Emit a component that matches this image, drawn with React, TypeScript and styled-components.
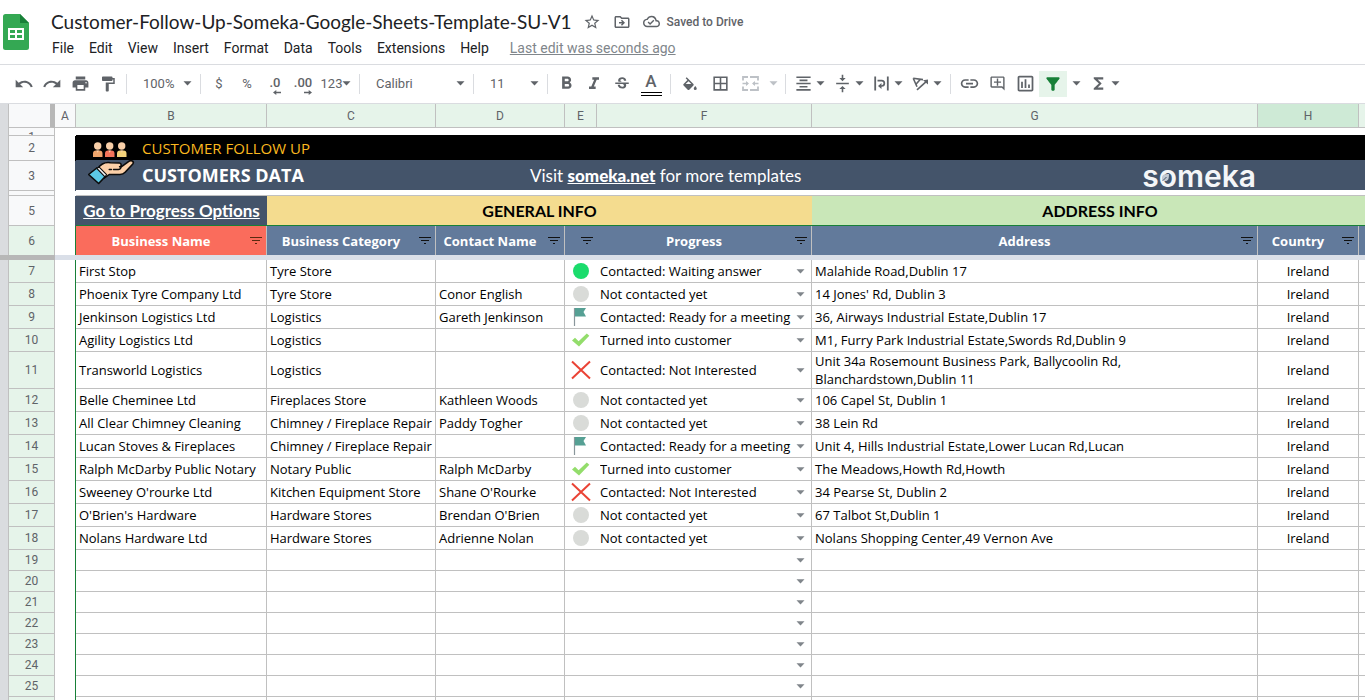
import React from 'react';
import styled, { createGlobalStyle, css } from 'styled-components';
import {
  MdUndo,
  MdRedo,
  MdPrint,
  MdFormatPaint,
  MdStarBorder,
  MdOutlineDriveFileMove,
  MdOutlineCloudDone,
  MdFormatBold,
  MdFormatItalic,
  MdStrikethroughS,
  MdBorderAll,
  MdFormatAlignCenter,
  MdVerticalAlignCenter,
  MdLink,
  MdOutlineAddComment,
  MdOutlineInsertChart,
  MdFilterAlt,
  MdFunctions,
} from 'react-icons/md';

const GRID = '#c0c0c0';
const GREEN = '#188038';
const NAVY = '#44546a';
const SLATE = '#627a9b';

const GlobalStyle = createGlobalStyle`
  *, *::before, *::after { box-sizing: border-box; }
  body {
    margin: 0;
    background: #fff;
    color: #202124;
    font-family: Roboto, 'Liberation Sans', sans-serif;
  }
  button, select {
    font: inherit;
    color: inherit;
    border: 0;
    margin: 0;
    padding: 0;
    background: none;
    cursor: pointer;
  }
`;

const Page = styled.div`
  display: flex;
  flex-direction: column;
  height: 100vh;
  overflow: hidden;
`;

/* ---------- document header ---------- */

const DocHeader = styled.header`
  display: flex;
  gap: 16px;
  height: 65px;
  flex: none;
  padding: 10px 0 0 3px;
  border-bottom: 1px solid #dadce0;
`;

const HomeLink = styled.a`
  display: block;
  padding-top: 4px;
`;

const DocInfo = styled.div`
  display: flex;
  flex-direction: column;
`;

const TitleRow = styled.div`
  display: flex;
  align-items: center;
  height: 23px;
  padding-left: 6px;
`;

const DocTitle = styled.h1`
  margin: 0 5px 0 0;
  font-family: Lato, sans-serif;
  font-size: 19px;
  line-height: 23px;
  font-weight: 400;
  white-space: nowrap;
`;

const TitleButton = styled.button`
  display: flex;
  align-items: center;
  gap: 7px;
  height: 22px;
  padding: 0 6px;
  color: #5f6368;
  font-size: 12px;
  font-weight: 500;
  white-space: nowrap;
`;

const MenuBar = styled.nav`
  display: flex;
  align-items: center;
  gap: 1px;
  height: 30px;
  font-size: 14px;
`;

const MenuItem = styled.button`
  padding: 0 7px;
  line-height: 24px;
  white-space: nowrap;
`;

const LastEdit = styled.a`
  margin-left: 13px;
  color: #80868b;
  text-decoration: underline;
  white-space: nowrap;
`;

/* ---------- toolbar ---------- */

const Toolbar = styled.div`
  display: flex;
  align-items: center;
  height: 39px;
  flex: none;
  padding: 0 0 1px 10px;
  border-bottom: 1px solid #dadce0;
  color: #5f6368;
  font-size: 13px;
`;

const Tool = styled.button<{ $w?: number; $active?: boolean; $muted?: boolean }>`
  display: flex;
  flex: none;
  align-items: center;
  justify-content: center;
  width: ${(p) => p.$w ?? 28}px;
  height: 26px;
  background: ${(p) => (p.$active ? '#e6f4ea' : 'transparent')};
  color: ${(p) => (p.$active ? GREEN : p.$muted ? '#bdc1c6' : 'inherit')};
`;

const SplitTool = styled.button`
  display: flex;
  flex: none;
  align-items: center;
  width: 39px;
  height: 26px;
`;

const SplitIcon = styled.span`
  display: flex;
  justify-content: center;
  width: 26px;
`;

const Divider = styled.span`
  flex: none;
  width: 1px;
  height: 20px;
  margin: 0 4px;
  background: #dadce0;
`;

const Picker = styled.label<{ $w: number }>`
  display: flex;
  flex: none;
  align-items: center;
  width: ${(p) => p.$w}px;
  padding: 0 4px 0 12px;
`;

const PickerSelect = styled.select`
  appearance: none;
  flex: 1;
  min-width: 0;
  height: 24px;
  outline: none;
`;

const Decimal = styled.span`
  display: flex;
  flex-direction: column;
  align-items: flex-end;
  padding-top: 4px;
  font-weight: 500;
  line-height: 14px;
`;

const Underlined = styled.span`
  display: flex;
  flex-direction: column;
  align-items: center;
  width: 21px;
  padding-bottom: 1px;
  border-bottom: 4px double #000;
  font-size: 17px;
  line-height: 20px;
  font-weight: 500;
`;

/* ---------- sheet ---------- */

const SheetArea = styled.main`
  flex: 1;
  min-height: 0;
  overflow: hidden;
`;

const Sheet = styled.table`
  table-layout: fixed;
  width: max(100%, 1388px);
  border-collapse: separate;
  border-spacing: 0;
  font-family: 'Open Sans', sans-serif;
  font-size: 13px;
  line-height: 18px;
  color: #000;
`;

const Col = styled.col<{ $w?: number }>`
  width: ${(p) => (p.$w ? `${p.$w}px` : 'auto')};
`;

const Row = styled.tr<{ $h: number }>`
  height: ${(p) => p.$h}px;
`;

const Gutter = styled.td<{ $dark?: boolean }>`
  padding: 0;
  background: ${(p) => (p.$dark ? '#b7b7b7' : '#dadcdf')};
`;

const headerText = css`
  padding: 0;
  font-family: Roboto, sans-serif;
  font-size: 12px;
  line-height: 14px;
  font-weight: 400;
  color: #5f6368;
  text-align: center;
`;

const Corner = styled.td`
  padding: 0;
  border: solid ${GRID};
  border-width: 0 5px 1px 1px;
  border-right-color: #b7b7b7;
  background: #f8f9fa;
`;

const ColumnHead = styled.th<{ $tone?: 'plain' | 'active' }>`
  ${headerText}
  border: solid ${GRID};
  border-width: 0 1px 1px 0;
  background: ${(p) => (p.$tone === 'plain' ? '#f8f9fa' : p.$tone === 'active' ? '#ceead6' : '#e6f4ea')};
`;

const RowHead = styled.th<{ $plain?: boolean; $open?: boolean }>`
  ${headerText}
  border: solid ${GRID};
  border-width: 0 1px ${(p) => (p.$open ? 0 : 1)}px 1px;
  background: ${(p) => (p.$plain ? '#f8f9fa' : '#e6f4ea')};
`;

const ClippedNumber = styled.div`
  height: 7px;
  padding-top: 2px;
  overflow: hidden;
`;

const FreezeHead = styled.td`
  padding: 0;
  background: #b7b7b7;
`;

const FreezeBar = styled.td`
  padding: 0;
  background: #dadfe8;
`;

/* Column A: an empty margin whose right edge takes the colour of what follows. */
const Margin = styled.td<{ $edge?: string }>`
  padding: 0;
  border-right: 1px solid ${(p) => p.$edge ?? '#fff'};
`;

const Strip = styled.td<{ $line: string }>`
  padding: 0;
  border-bottom: 1px solid ${(p) => p.$line};
`;

const BannerCell = styled.td<{ $bg: string; $line: string; $pad?: number }>`
  position: relative;
  padding: 0 0 0 ${(p) => p.$pad ?? 0}px;
  background: ${(p) => p.$bg};
  border-bottom: 1px solid ${(p) => p.$line};
  color: #fff;
  font-family: Lato, sans-serif;
  font-size: 17px;
  line-height: 24px;
  white-space: nowrap;
`;

const BannerKicker = styled.span`
  color: #fbb91f;
  font-family: 'Open Sans', sans-serif;
  font-size: 15px;
`;

const BannerTitle = styled.strong`
  font-family: 'Open Sans', sans-serif;
  font-size: 18px;
`;

const BannerArt = styled.svg`
  position: absolute;
  left: 12px;
  top: 4px;
  z-index: 1;
`;

const BannerLink = styled.a`
  color: #fff;
  font-weight: 900;
`;

const SheetLink = styled.a`
  color: #fff;
  font-size: 17px;
`;

const Brand = styled.div`
  padding-right: 2px;
  color: #f4f6f8;
  font-family: Inter, sans-serif;
  font-size: 30px;
  line-height: 28px;
  font-weight: 600;
  text-align: right;
`;

const BrandLeaf = styled.svg`
  position: absolute;
  right: 88px;
  top: 12px;
`;

const GroupHead = styled.th<{ $bg: string }>`
  padding: 0;
  background: ${(p) => p.$bg};
  border: solid ${GREEN};
  border-width: 0 0 1px;
  font-family: Lato, sans-serif;
  font-size: 16px;
  font-weight: 700;
  white-space: nowrap;
`;

const FieldHead = styled.th<{ $bg?: string; $open?: boolean }>`
  padding: 0;
  background: ${(p) => p.$bg ?? SLATE};
  border-right: ${(p) => (p.$open ? 0 : 1)}px solid ${GRID};
  color: #fff;
  font-weight: 700;
  white-space: nowrap;
`;

const FieldLayout = styled.div`
  display: flex;
  align-items: center;
`;

const FieldName = styled.span`
  flex: 1;
  min-width: 0;
`;

const FilterButton = styled.button`
  display: flex;
  justify-content: center;
  width: 20px;
`;

const Cell = styled.td<{ $open?: boolean; $center?: boolean }>`
  padding: 0 0 0 ${(p) => (p.$center ? 0 : 3)}px;
  border: solid ${GRID};
  border-width: 0 ${(p) => (p.$open ? 0 : 1)}px 1px 0;
  text-align: ${(p) => (p.$center ? 'center' : 'left')};
  white-space: nowrap;
`;

const StatusIcon = styled.svg`
  display: block;
  margin: 0 auto;
`;

const ProgressBox = styled.div`
  display: flex;
  align-items: center;
  padding-right: 6px;
`;

const ProgressSelect = styled.select`
  appearance: none;
  flex: 1;
  min-width: 0;
  height: 18px;
  outline: none;
`;

/* ---------- drawings ---------- */

const Arrow = ({ color = 'currentColor' }: { color?: string }) => (
  <svg width="9" height="5" viewBox="0 0 9 5" aria-hidden="true">
    <path d="M0.5 0.3h8L4.5 4.6z" fill={color} />
  </svg>
);

const FilterLines = ({ color = '#111' }: { color?: string }) => (
  <svg width="12" height="8" viewBox="0 0 12 8" aria-hidden="true">
    <path d="M0 0.5h12M2 3.5h8M5 6.5h2" stroke={color} />
  </svg>
);

const SheetsLogo = () => (
  <svg width="26" height="36" viewBox="0 0 26 36" aria-hidden="true">
    <path d="M2.5 0H17l9 9v24.5a2.5 2.5 0 0 1-2.5 2.5h-21A2.5 2.5 0 0 1 0 33.5V2.5A2.5 2.5 0 0 1 2.5 0z" fill="#34a853" />
    <path d="M17 0l9 9h-9z" fill="#188038" />
    <path d="M5 14h16v12H5z" fill="#fff" />
    <path d="M7 16h5v3H7zM14 16h5v3h-5zM7 21h5v3H7zM14 21h5v3h-5z" fill="#34a853" />
  </svg>
);

const ShiftArrow = ({ right }: { right?: boolean }) => (
  <svg width="8" height="5" viewBox="0 0 8 5" aria-hidden="true">
    <path d={right ? 'M0 1.7h4.7V0L8 2.5 4.7 5V3.3H0z' : 'M8 1.7H3.3V0L0 2.5 3.3 5V3.3H8z'} fill="currentColor" />
  </svg>
);

const FillIcon = () => (
  <svg width="18" height="18" viewBox="0 -3 24 24" fill="currentColor" aria-hidden="true">
    <path d="M16.56 8.94L7.62 0 6.21 1.41l2.38 2.38-5.15 5.15a1.49 1.49 0 0 0 0 2.12l5.5 5.5c.29.29.68.44 1.06.44s.77-.15 1.06-.44l5.5-5.5c.59-.58.59-1.53 0-2.12zM6.2 9L10 5.21 13.8 9zM19 11.5s-2 2.17-2 3.5a2 2 0 0 0 4 0c0-1.33-2-3.5-2-3.5z" />
  </svg>
);

const MergeIcon = () => (
  <svg width="17" height="15" viewBox="0 0 17 15" fill="none" stroke="currentColor" strokeWidth="1.8" aria-hidden="true">
    <path d="M1 4.5V1h5M8 1h3M11 1h5v3.5M1 10.500V14h5M8 14h3M11 14h5v-3.500" />
    <path d="M0.5 7.5H6M16.5 7.5H11" strokeWidth="1.6" />
    <path d="M4 5l3 2.5L4 10zM13 5l-3 2.500L13 10z" fill="currentColor" stroke="none" />
  </svg>
);

const WrapIcon = () => (
  <svg width="15" height="15" viewBox="0 0 15 15" fill="none" stroke="currentColor" strokeWidth="1.8" aria-hidden="true">
    <path d="M1.2 0.5v14M13.800 0.500v14" />
    <path d="M3.500 4.700h4.200a2.600 2.600 0 0 1 0 5.300H6.500" strokeWidth="1.7" />
    <path d="M7.500 7v6L4 10z" fill="currentColor" stroke="none" />
  </svg>
);

const RotateIcon = () => (
  <svg width="17" height="15" viewBox="0 0 17 15" fill="none" stroke="currentColor" strokeWidth="1.6" aria-hidden="true">
    <path d="M1.200 2.200L11 3.600M1.200 2.200L5 10.800M8.400 3.200L4.200 8" />
    <path d="M5 13.800L14.200 5.600" />
    <path d="M16 3.600v5L11 4.200z" fill="currentColor" stroke="none" />
  </svg>
);

const peopleTones = ['#f0a56c', '#f3745a', '#f3d27a'];

const CustomersArt = () => (
  <BannerArt width="48" height="46" viewBox="0 0 48 46" aria-hidden="true">
    {peopleTones.map((tone, i) => (
      <g key={tone} transform={`translate(${5 + i * 12} 2)`}>
        <path d="M0 15V11.500a3 3 0 0 1 3-3h3.500a3 3 0 0 1 3 3V15z" fill={tone} />
        <circle cx="4.700" cy="4" r="3.700" fill="#f8cfa8" />
        <path d="M3.400 8.500h2.600L4.700 10.800z" fill="#f8cfa8" />
      </g>
    ))}
    <g transform="translate(-1 0) scale(1.060 1)" stroke="#0c0c0c" strokeLinejoin="round">
      <path
        d="M10 28.500c3.500-5 7.500-6.500 12-5.700l8.500.3c2.200.2 2.400 3.200.3 3.700h1.500l7.500-5.600c2.200-1.500 5 .6 3.400 2.800l-7.200 8.300c-1.400 1.600-2.800 2.200-4.900 2.200H21l-4.500 3.500z"
        fill="#fcd0a8"
        strokeWidth="1.500"
      />
      <path d="M21 29.500h2M25 29.500h4.500c1.200 0 2.200-.8 2.500-2.200" fill="none" strokeWidth="1.400" strokeLinecap="round" />
      <path d="M1.500 34.500l7.700-6.500 8 8.500-6.200 7z" fill="#5cc9e6" strokeWidth="1.500" />
      <path d="M9 28.200l2.500-1 7 7.500-1.500 2.200z" fill="#f4f4f4" strokeWidth="1" />
    </g>
  </BannerArt>
);

type Status = 'waiting' | 'none' | 'meeting' | 'customer' | 'rejected';

const statusLabels: Record<Status, string> = {
  waiting: 'Contacted: Waiting answer',
  none: 'Not contacted yet',
  meeting: 'Contacted: Ready for a meeting',
  customer: 'Turned into customer',
  rejected: 'Contacted: Not Interested',
};

const StatusMark = ({ status }: { status: Status }) => (
  <StatusIcon width="20" height="20" viewBox="0 0 20 20" aria-hidden="true">
    {status === 'waiting' && <circle cx="10" cy="10" r="8" fill="#1bdc6c" />}
    {status === 'none' && <circle cx="10" cy="10" r="8" fill="#d9dbd8" />}
    {status === 'meeting' && (
      <>
        <path d="M3.500 1v18" stroke="#8a979c" strokeWidth="1.200" />
        <path d="M4 1h11l-2.500 4L15 9.500H4z" fill="#56a094" />
      </>
    )}
    {status === 'customer' && <path d="M1 10.500l3-2.800 3.600 3.500L15.800 3.500l2.500 2.200L8 16.500z" fill="#93dd6b" />}
    {status === 'rejected' && <path d="M1 1.500l18 17M19 1.500L1 18.500" stroke="#ea4335" strokeWidth="2" />}
  </StatusIcon>
);

/* ---------- data ---------- */

type Customer = {
  name: string;
  category: string;
  contact: string;
  status: Status;
  address: string[];
};

const customers: Customer[] = [
  { name: 'First Stop', category: 'Tyre Store', contact: '', status: 'waiting', address: ['Malahide Road,Dublin 17'] },
  { name: 'Phoenix Tyre Company Ltd', category: 'Tyre Store', contact: 'Conor English', status: 'none', address: ["14 Jones' Rd, Dublin 3"] },
  { name: 'Jenkinson Logistics Ltd', category: 'Logistics', contact: 'Gareth Jenkinson', status: 'meeting', address: ['36, Airways Industrial Estate,Dublin 17'] },
  { name: 'Agility Logistics Ltd', category: 'Logistics', contact: '', status: 'customer', address: ['M1, Furry Park Industrial Estate,Swords Rd,Dublin 9'] },
  { name: 'Transworld Logistics', category: 'Logistics', contact: '', status: 'rejected', address: ['Unit 34a Rosemount Business Park, Ballycoolin Rd,', 'Blanchardstown,Dublin 11'] },
  { name: 'Belle Cheminee Ltd', category: 'Fireplaces Store', contact: 'Kathleen Woods', status: 'none', address: ['106 Capel St, Dublin 1'] },
  { name: 'All Clear Chimney Cleaning', category: 'Chimney / Fireplace Repair', contact: 'Paddy Togher', status: 'none', address: ['38 Lein Rd'] },
  { name: 'Lucan Stoves & Fireplaces', category: 'Chimney / Fireplace Repair', contact: '', status: 'meeting', address: ['Unit 4, Hills Industrial Estate,Lower Lucan Rd,Lucan'] },
  { name: 'Ralph McDarby Public Notary', category: 'Notary Public', contact: 'Ralph McDarby', status: 'customer', address: ['The Meadows,Howth Rd,Howth'] },
  { name: "Sweeney O'rourke Ltd", category: 'Kitchen Equipment Store', contact: "Shane O'Rourke", status: 'rejected', address: ['34 Pearse St, Dublin 2'] },
  { name: "O'Brien's Hardware", category: 'Hardware Stores', contact: "Brendan O'Brien", status: 'none', address: ['67 Talbot St,Dublin 1'] },
  { name: 'Nolans Hardware Ltd', category: 'Hardware Stores', contact: 'Adrienne Nolan', status: 'none', address: ['Nolans Shopping Center,49 Vernon Ave'] },
];

const emptyRows = [19, 20, 21, 22, 23, 24, 25, 26];
const columnWidths = [8, 47, 21, 191, 169, 129, 32, 215, 446, 101];
const columns = ['B', 'C', 'D', 'E', 'F', 'G'];
const menus = ['File', 'Edit', 'View', 'Insert', 'Format', 'Data', 'Tools', 'Extensions', 'Help'];

const Split = ({ label, children }: { label: string; children: React.ReactNode }) => (
  <SplitTool aria-label={label}>
    <SplitIcon>{children}</SplitIcon>
    <Arrow />
  </SplitTool>
);

const ToolbarPicker = ({ label, width, value }: { label: string; width: number; value: string }) => (
  <Picker $w={width}>
    <PickerSelect aria-label={label} defaultValue={value}>
      <option>{value}</option>
    </PickerSelect>
    <Arrow />
  </Picker>
);

const Field = ({ name, bg, open }: { name: string; bg?: string; open?: boolean }) => (
  <FieldHead scope="col" $bg={bg} $open={open}>
    <FieldLayout>
      <FieldName>{name}</FieldName>
      <FilterButton aria-label={`Filter ${name || 'status'}`}>
        <FilterLines color={bg ? '#5a2a10' : '#111'} />
      </FilterButton>
    </FieldLayout>
  </FieldHead>
);

const Progress = ({ status, row }: { status?: Status; row: number }) => (
  <Cell>
    <ProgressBox>
      <ProgressSelect aria-label={`Progress, row ${row}`} defaultValue={status ?? ''}>
        <option value="" />
        {Object.entries(statusLabels).map(([key, label]) => (
          <option key={key} value={key}>
            {label}
          </option>
        ))}
      </ProgressSelect>
      <Arrow color="#80868b" />
    </ProgressBox>
  </Cell>
);

export default function App() {
  return (
    <Page>
      <GlobalStyle />
      <DocHeader>
        <HomeLink href="#" aria-label="Sheets home">
          <SheetsLogo />
        </HomeLink>
        <DocInfo>
          <TitleRow>
            <DocTitle>Customer-Follow-Up-Someka-Google-Sheets-Template-SU-V1</DocTitle>
            <TitleButton aria-label="Star">
              <MdStarBorder size={18} />
            </TitleButton>
            <TitleButton aria-label="Move">
              <MdOutlineDriveFileMove size={18} />
            </TitleButton>
            <TitleButton>
              <MdOutlineCloudDone size={17} />
              Saved to Drive
            </TitleButton>
          </TitleRow>
          <MenuBar>
            {menus.map((item) => (
              <MenuItem key={item}>{item}</MenuItem>
            ))}
            <LastEdit href="#">Last edit was seconds ago</LastEdit>
          </MenuBar>
        </DocInfo>
      </DocHeader>

      <Toolbar role="toolbar" aria-label="Formatting">
        <Tool aria-label="Undo"><MdUndo size={20} /></Tool>
        <Tool aria-label="Redo"><MdRedo size={20} /></Tool>
        <Tool aria-label="Print"><MdPrint size={19} /></Tool>
        <Tool aria-label="Paint format"><MdFormatPaint size={18} /></Tool>
        <Divider />
        <ToolbarPicker label="Zoom" width={65} value="100%" />
        <Divider />
        <Tool>$</Tool>
        <Tool>%</Tool>
        <Tool aria-label="Decrease decimal places">
          <Decimal>.0<ShiftArrow /></Decimal>
        </Tool>
        <Tool aria-label="Increase decimal places">
          <Decimal>.00<ShiftArrow right /></Decimal>
        </Tool>
        <Tool $w={38} aria-label="More formats">123<Arrow /></Tool>
        <Divider />
        <ToolbarPicker label="Font" width={105} value="Calibri" />
        <Divider />
        <ToolbarPicker label="Font size" width={65} value="11" />
        <Divider />
        <Tool aria-label="Bold"><MdFormatBold size={21} /></Tool>
        <Tool aria-label="Italic"><MdFormatItalic size={20} /></Tool>
        <Tool aria-label="Strikethrough"><MdStrikethroughS size={18} /></Tool>
        <Tool $w={30} aria-label="Text color"><Underlined>A</Underlined></Tool>
        <Divider />
        <Tool $w={30} aria-label="Fill color"><FillIcon /></Tool>
        <Tool $w={30} aria-label="Borders"><MdBorderAll size={19} /></Tool>
        <Tool $w={30} $muted aria-label="Merge cells"><MergeIcon /></Tool>
        <Tool $w={16} $muted aria-label="Merge options"><Arrow /></Tool>
        <Divider />
        <Split label="Horizontal align"><MdFormatAlignCenter size={19} /></Split>
        <Split label="Vertical align"><MdVerticalAlignCenter size={19} /></Split>
        <Split label="Text wrapping"><WrapIcon /></Split>
        <Split label="Text rotation"><RotateIcon /></Split>
        <Divider />
        <Tool aria-label="Insert link"><MdLink size={21} /></Tool>
        <Tool aria-label="Insert comment"><MdOutlineAddComment size={17} /></Tool>
        <Tool aria-label="Insert chart"><MdOutlineInsertChart size={21} /></Tool>
        <Tool $active aria-label="Filter"><MdFilterAlt size={20} /></Tool>
        <Tool $w={18} aria-label="Filter views"><Arrow /></Tool>
        <Split label="Functions"><MdFunctions size={19} /></Split>
      </Toolbar>

      <SheetArea>
        <Sheet>
          <colgroup>
            {columnWidths.map((w, i) => (
              <Col key={i} $w={w} />
            ))}
            <Col />
          </colgroup>
          <thead>
            <Row $h={24}>
              <Gutter />
              <Corner />
              <ColumnHead scope="col" $tone="plain">A</ColumnHead>
              {columns.map((letter) => (
                <ColumnHead key={letter} scope="col">{letter}</ColumnHead>
              ))}
              <ColumnHead scope="col" $tone="active">H</ColumnHead>
              <ColumnHead />
            </Row>
          </thead>
          <tbody>
            <Row $h={8}>
              <Gutter />
              <RowHead scope="row" $plain>
                <ClippedNumber>1</ClippedNumber>
              </RowHead>
              <Margin />
              <Strip colSpan={8} $line="#000" />
            </Row>
            <Row $h={25}>
              <Gutter />
              <RowHead scope="row" $plain>2</RowHead>
              <Margin $edge="#000" />
              <BannerCell colSpan={8} $bg="#000" $line={NAVY} $pad={66}>
                <CustomersArt />
                <BannerKicker>CUSTOMER FOLLOW UP</BannerKicker>
              </BannerCell>
            </Row>
            <Row $h={30}>
              <Gutter />
              <RowHead scope="row" $plain>3</RowHead>
              <Margin $edge={NAVY} />
              <BannerCell colSpan={2} $bg={NAVY} $line="#fff" $pad={66}>
                <BannerTitle>CUSTOMERS DATA</BannerTitle>
              </BannerCell>
              <BannerCell colSpan={3} $bg={NAVY} $line="#fff" $pad={94}>
                Visit <BannerLink href="#">someka.net</BannerLink> for more templates
              </BannerCell>
              <BannerCell $bg={NAVY} $line="#fff">
                <Brand>someka</Brand>
                <BrandLeaf width="9" height="9" viewBox="0 0 9 9" aria-hidden="true">
                  <path d="M1 8V4.500C1 2 3 1 8 1c0 5-1 7-3.500 7z" fill="#c3cad3" />
                  <path d="M2 7.500L5.500 4" stroke={NAVY} />
                </BrandLeaf>
              </BannerCell>
              <BannerCell colSpan={2} $bg={NAVY} $line="#fff" />
            </Row>
            <Row $h={5}>
              <Gutter />
              <RowHead scope="row" $plain />
              <Margin />
              <Strip colSpan={8} $line={GRID} />
            </Row>
            <Row $h={30}>
              <Gutter />
              <RowHead scope="row" $plain>5</RowHead>
              <Margin $edge={NAVY} />
              <GroupHead $bg={NAVY}>
                <SheetLink href="#">Go to Progress Options</SheetLink>
              </GroupHead>
              <GroupHead colSpan={4} $bg="#f4dc8f">GENERAL INFO</GroupHead>
              <GroupHead colSpan={3} $bg="#c9e7b8">ADDRESS INFO</GroupHead>
            </Row>
            <Row $h={29}>
              <Gutter />
              <RowHead scope="row" $open>6</RowHead>
              <Margin $edge={GREEN} />
              <Field name="Business Name" bg="#fa6c5c" />
              <Field name="Business Category" />
              <Field name="Contact Name" />
              <Field name="" open />
              <Field name="Progress" />
              <Field name="Address" />
              <Field name="Country" />
              <FieldHead $open />
            </Row>
            <Row $h={5}>
              <Gutter $dark />
              <FreezeHead />
              <FreezeBar colSpan={9} />
            </Row>
            {customers.map((c, i) => (
              <Row key={c.name} $h={c.address.length > 1 ? 37 : 23}>
                <Gutter />
                <RowHead scope="row">{i + 7}</RowHead>
                <Margin $edge={GREEN} />
                <Cell>{c.name}</Cell>
                <Cell>{c.category}</Cell>
                <Cell>{c.contact}</Cell>
                <Cell $open $center>
                  <StatusMark status={c.status} />
                </Cell>
                <Progress status={c.status} row={i + 7} />
                <Cell>
                  {c.address.map((line) => (
                    <div key={line}>{line}</div>
                  ))}
                </Cell>
                <Cell $center>Ireland</Cell>
                <Cell />
              </Row>
            ))}
            {emptyRows.map((n) => (
              <Row key={n} $h={21}>
                <Gutter />
                <RowHead scope="row">{n}</RowHead>
                <Margin $edge={GREEN} />
                <Cell />
                <Cell />
                <Cell />
                <Cell $open />
                <Progress row={n} />
                <Cell />
                <Cell />
                <Cell />
              </Row>
            ))}
          </tbody>
        </Sheet>
      </SheetArea>
    </Page>
  );
}
